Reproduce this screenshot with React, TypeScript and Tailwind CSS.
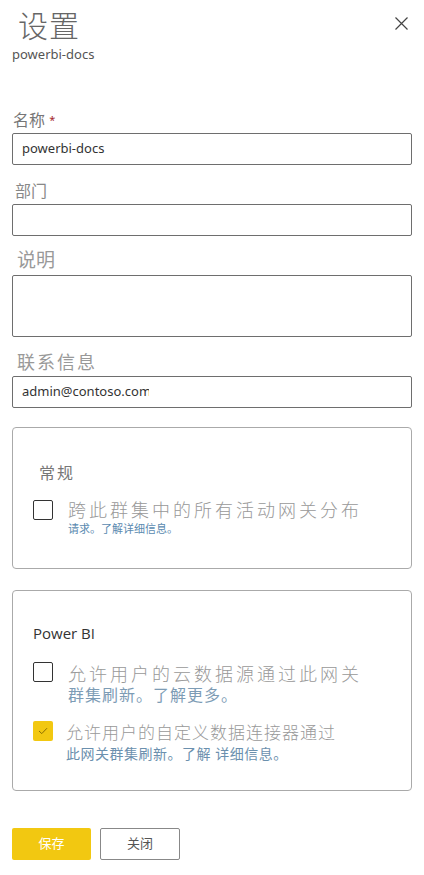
import React from 'react';

const cjk = { fontFamily: '"Noto Sans", "Noto Sans CJK SC", sans-serif' };

const Field: React.FC<{ label: React.ReactNode; labelClass: string; value?: React.ReactNode; tall?: boolean; top: string }> = ({ label, labelClass, value, tall, top }) => (
  <div className={top}>
    <div className={labelClass}>{label}</div>
    <div
      className={`mt-[3px] w-full border border-[#6e6e6e] rounded-[2px] px-[9px] flex items-center text-[13px] text-[#333] overflow-hidden whitespace-nowrap ${tall ? 'h-[62px]' : 'h-[32px]'}`}
    >
      {value}
    </div>
  </div>
);

const Box: React.FC<{ checked?: boolean }> = ({ checked }) =>
  checked ? (
    <span className="w-[20px] h-[20px] shrink-0 rounded-[2px] bg-[#f2c811] flex items-center justify-center">
      <svg width="10" height="8" viewBox="0 0 10 8" fill="none">
        <path d="M1 4 L3.8 6.6 L9 1.2" stroke="#8a6d00" strokeWidth="1" />
      </svg>
    </span>
  ) : (
    <span className="w-[20px] h-[20px] shrink-0 rounded-[2px] border border-[#333] bg-white" />
  );

export default function App() {
  return (
    <div className="w-[424px] h-[875px] bg-white px-3 relative" style={cjk}>
      <div className="flex items-start justify-between">
        <div className="pt-[8px] pl-[6px] text-[30px] leading-[36px] text-[#666] font-light tracking-[1px]">设置</div>
        <svg className="mt-[17px] mr-[4px]" width="13" height="13" viewBox="0 0 13 13" fill="none">
          <path d="M0.5 0.5 L12.5 12.5 M12.5 0.5 L0.5 12.5" stroke="#444" strokeWidth="1.2" />
        </svg>
      </div>
      <div className="text-[13px] leading-[16px] text-[#555] mt-[2px]">powerbi-docs</div>

      <Field
        top="mt-[48px]"
        labelClass="text-[16px] leading-[20px] text-[#777] pl-[1px]"
        label={<>名称 <span className="text-[#a4262c] text-[11px] align-top">*</span></>}
        value="powerbi-docs"
      />
      <Field top="mt-[16px]" labelClass="text-[16px] leading-[20px] text-[#888] pl-[3px]" label="部门" />
      <Field top="mt-[13px]" labelClass="text-[19px] leading-[23px] text-[#999] pl-[5px]" label="说明" tall />
      <Field
        top="mt-[14px]"
        labelClass="text-[18px] leading-[22px] text-[#999] pl-[5px] tracking-[2px]"
        label="联系信息"
        value={<span className="inline-block w-[127px] overflow-hidden">admin@contoso.com</span>}
      />

      <div className="mt-[19px] h-[142px] border border-[#aaa] rounded-[4px] px-[20px] pt-[35px]">
        <div className="text-[16px] leading-[20px] text-[#777] pl-[6px] tracking-[2px]">常规</div>
        <div className="mt-[17px] flex items-start gap-[15px]">
          <Box />
          <div className="-mt-[1px]">
            <div className="text-[18px] leading-[22px] text-[#999] font-light tracking-[3px]">跨此群集中的所有活动网关分布</div>
            <div className="text-[11px] leading-[13px] text-[#5a8ab0] mt-[1px]">请求。了解详细信息。</div>
          </div>
        </div>
      </div>

      <div className="mt-[21px] h-[201px] border border-[#aaa] rounded-[4px] px-[20px] pt-[33px]">
        <div className="text-[15px] leading-[18px] text-[#333] font-medium" style={{ fontFamily: '"Open Sans", "Noto Sans", sans-serif' }}>Power BI</div>
        <div className="mt-[20px] flex items-start gap-[15px]">
          <Box />
          <div className="mt-[1px]">
            <div className="text-[18px] leading-[22px] text-[#999] font-light tracking-[3px]">允许用户的云数据源通过此网关</div>
            <div className="text-[16px] leading-[17px] text-[#7d9cb5] tracking-[1px] mt-[2px]">群集刷新。了解更多。</div>
          </div>
        </div>
        <div className="mt-[17px] flex items-start gap-[13px]">
          <Box checked />
          <div className="mt-[1px]">
            <div className="text-[17px] leading-[21px] text-[#999] font-light tracking-[1px]">允许用户的自定义数据连接器通过</div>
            <div className="text-[14px] leading-[17px] text-[#6b90ae] tracking-[0.5px] mt-[2px]">此网关群集刷新。了解 详细信息。</div>
          </div>
        </div>
      </div>

      <div className="mt-[37px] flex gap-[9px]">
        <button className="w-[79px] h-[32px] rounded-[2px] bg-[#f2c811] text-white text-[13px]">保存</button>
        <button className="w-[80px] h-[32px] rounded-[2px] border border-[#888] bg-white text-[#555] text-[13px]">关闭</button>
      </div>
    </div>
  );
}
